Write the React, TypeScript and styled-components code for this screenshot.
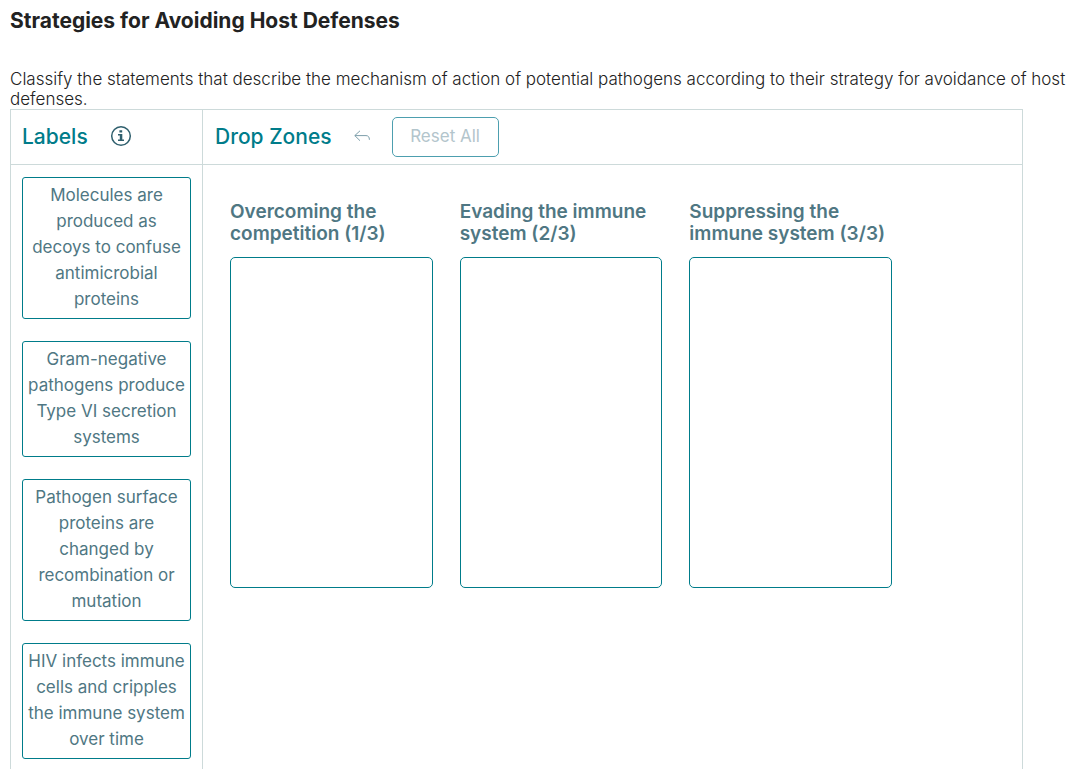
import React from "react";
import styled, { createGlobalStyle } from "styled-components";

const teal = "#007c8a";
const slate = "#4f7783";
const line = "#cddada";

const GlobalStyle = createGlobalStyle`
  *, *::before, *::after { box-sizing: border-box; }
  body {
    margin: 0;
    background: #fff;
    color: #222;
    font-family: "Proxima Nova", Inter, "Liberation Sans", sans-serif;
  }
`;

const Page = styled.main`
  height: 100vh;
  overflow: hidden;
  padding: 9px 0 0 10px;
  display: flex;
  flex-direction: column;
`;

const Title = styled.h1`
  margin: 0 0 36px;
  font-size: 21px;
  line-height: 24px;
  font-weight: 700;
`;

const Prompt = styled.p`
  margin: 0;
  font-size: 17px;
  line-height: 20px;
  font-weight: 300;
`;

const Board = styled.section`
  flex: none;
  display: grid;
  grid-template-columns: 192px 1fr;
  margin-right: 46px;
  border: 1px solid ${line};
`;

const BoardHeader = styled.header<{ $divided?: boolean }>`
  display: flex;
  align-items: center;
  height: 55px;
  padding: 0 ${(p) => (p.$divided ? "11px" : "12px")};
  border-bottom: 1px solid ${line};
  border-right: ${(p) => (p.$divided ? `1px solid ${line}` : "none")};
`;

const Heading = styled.h2`
  margin: 0;
  padding-bottom: 1px;
  font-size: 21px;
  line-height: 24px;
  font-weight: 500;
  color: ${teal};
`;

const IconButton = styled.button`
  display: flex;
  margin: 0 22px 2px;
  padding: 0;
  border: 0;
  background: none;
  color: #2f5f6d;
  &:disabled { color: #7d9eaa; }
`;

const ResetButton = styled.button`
  width: 107px;
  height: 40px;
  padding: 0 0 3px;
  border: 1px solid #4d9faf;
  border-radius: 5px;
  background: #fff;
  color: #b3c5cc;
  font-family: inherit;
  font-size: 17px;
  font-weight: 400;
`;

const LabelList = styled.ul`
  display: flex;
  flex-direction: column;
  gap: 22px;
  margin: 0;
  padding: 12px 11px;
  list-style: none;
  border-right: 1px solid ${line};
`;

const LabelCard = styled.button`
  display: block;
  width: 100%;
  padding: 4px 4px 6px;
  border: 1px solid ${teal};
  border-radius: 3px;
  background: #fff;
  color: ${slate};
  font-family: inherit;
  font-size: 17px;
  line-height: 26px;
  text-align: center;
`;

const Zones = styled.div`
  display: grid;
  grid-template-columns: repeat(3, 1fr);
  align-content: start;
  gap: 27px;
  padding: 36px 130px 0 27px;
`;

const ZoneTitle = styled.h3`
  margin: 0 0 12px;
  font-size: 19px;
  line-height: 22px;
  font-weight: 600;
  color: ${slate};
`;

const ZoneBox = styled.div`
  height: 331px;
  border: 1px solid ${teal};
  border-radius: 5px;
`;

const labels = [
  "Molecules are produced as decoys to confuse antimicrobial proteins",
  "Gram-negative pathogens produce Type VI secretion systems",
  "Pathogen surface proteins are changed by recombination or mutation",
  "HIV infects immune cells and cripples the immune system over time",
];

const zones = [
  "Overcoming the competition (1/3)",
  "Evading the immune system (2/3)",
  "Suppressing the immune system (3/3)",
];

const InfoIcon = () => (
  <svg width="22" height="22" viewBox="0 0 22 22" fill="none" aria-hidden="true">
    <circle cx="11" cy="11" r="9.3" stroke="currentColor" strokeWidth="1.5" />
    <path d="M9.4 5.3h2.8v2.2H9.4zM8 9h4.3v5.5H14V16H8v-1.500h1.800v-4H8z" fill="currentColor" />
  </svg>
);

const UndoIcon = () => (
  <svg width="16" height="12" viewBox="0 0 16 12" fill="none" stroke="currentColor" aria-hidden="true">
    <path d="M6 .8.8 5.600 6 10.700M.8 5.600h11.200c2.200 0 3.400 1.300 3.400 4.200" />
  </svg>
);

export default function App() {
  return (
    <Page>
      <GlobalStyle />
      <Title>Strategies for Avoiding Host Defenses</Title>
      <Prompt>
        Classify the statements that describe the mechanism of action of potential pathogens
        according to their strategy for avoidance of host defenses.
      </Prompt>
      <Board>
        <BoardHeader $divided>
          <Heading>Labels</Heading>
          <IconButton type="button" aria-label="Label information">
            <InfoIcon />
          </IconButton>
        </BoardHeader>
        <BoardHeader>
          <Heading>Drop Zones</Heading>
          <IconButton type="button" aria-label="Undo" disabled>
            <UndoIcon />
          </IconButton>
          <ResetButton type="button" disabled>
            Reset All
          </ResetButton>
        </BoardHeader>
        <LabelList>
          {labels.map((text) => (
            <li key={text}>
              <LabelCard type="button" draggable>
                {text}
              </LabelCard>
            </li>
          ))}
        </LabelList>
        <Zones>
          {zones.map((name) => (
            <section key={name} aria-label={name}>
              <ZoneTitle>{name}</ZoneTitle>
              <ZoneBox />
            </section>
          ))}
        </Zones>
      </Board>
    </Page>
  );
}
